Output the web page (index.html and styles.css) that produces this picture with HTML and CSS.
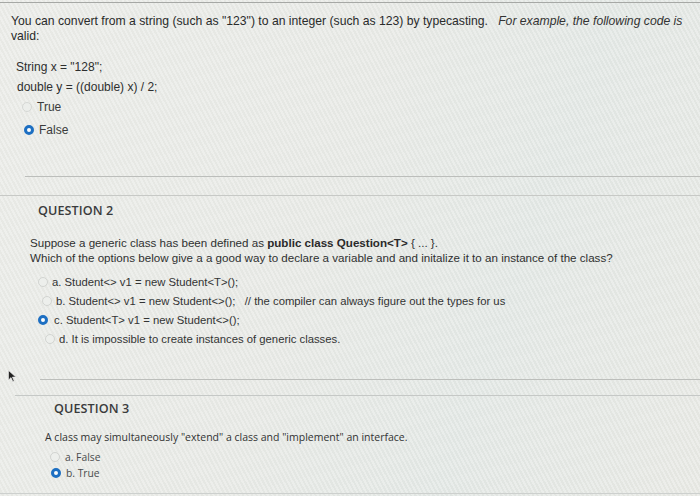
FILE: index.html
```html
<!DOCTYPE html>
<html>
<head>
<meta charset="utf-8">
<link rel="stylesheet" href="styles.css">
</head>
<body>
<div class="page">
  <div class="rule rule-top"></div>

  <section class="q1">
    <p class="intro">You can convert from a string (such as "123") to an integer (such as 123) by typecasting. &nbsp; <em>For example, the following code is</em><br>valid:</p>
    <div class="code">
      <div class="code-line">String x = "128";</div>
      <div class="code-line code-2">double y = ((double) x) / 2;</div>
    </div>
    <div class="opts q1-opts">
      <div class="opt opt-true"><span class="radio"></span><span>True</span></div>
      <div class="opt opt-false"><span class="radio on"></span><span>False</span></div>
    </div>
  </section>

  <div class="rule rule-a1"></div>
  <div class="rule rule-b1"></div>

  <section class="q2">
    <h2 class="qtitle">QUESTION 2</h2>
    <p class="qtext">Suppose a generic class has been defined as <b>public class Question&lt;T&gt;</b> { ... }.<br>Which of the options below give a a good way to declare a variable and and initalize it to an instance of the class?</p>
    <div class="opts q2-opts">
      <div class="opt o-a"><span class="radio"></span><span>a. Student&lt;&gt; v1 = new Student&lt;T&gt;();</span></div>
      <div class="opt o-b"><span class="radio"></span><span>b. Student&lt;&gt; v1 = new Student&lt;&gt;(); &nbsp; // the compiler can always figure out the types for us</span></div>
      <div class="opt o-c"><span class="radio on"></span><span>c. Student&lt;T&gt; v1 = new Student&lt;&gt;();</span></div>
      <div class="opt o-d"><span class="radio"></span><span>d. It is impossible to create instances of generic classes.</span></div>
    </div>
  </section>

  <div class="rule rule-a2"></div>
  <div class="rule rule-b2"></div>

  <section class="q3">
    <h2 class="qtitle">QUESTION 3</h2>
    <p class="qtext">A class may simultaneously "extend" a class and "implement" an interface.</p>
    <div class="opts q3-opts">
      <div class="opt o3-a"><span class="radio"></span><span>a. False</span></div>
      <div class="opt o3-b"><span class="radio on"></span><span>b. True</span></div>
    </div>
  </section>

  <div class="rule rule-bottom"></div>

  <svg class="cursor" width="9" height="12" viewBox="0 0 9 12"><path d="M0.5 0.5 L0.5 10 L3 7.6 L4.8 11.5 L6.2 10.9 L4.4 7.1 L7.8 7.1 Z" fill="#222" stroke="#eee" stroke-width="0.6"/></svg>
</div>
</body>
</html>
```

FILE: styles.css
```css
html, body {
  margin: 0;
  padding: 0;
}
body {
  width: 700px;
  height: 496px;
  overflow: hidden;
  background-color: #e5e7e3;
  background-image:
    repeating-linear-gradient(62deg, rgba(255,255,255,0.3) 0 2px, rgba(0,0,0,0) 2px 4px),
    linear-gradient(110deg, #e8e9e5 0%, #e5e7e3 45%, #e0e5e2 70%, #e5e6e1 100%);
  font-family: "Liberation Sans", Arial, sans-serif;
  color: #2f3030;
}
.page {
  position: relative;
  padding-top: 2px;
  height: 494px;
}
p { margin: 0; }
h2 { margin: 0; }

.rule {
  height: 0;
  border-top: 1px solid #bcbebb;
}
.rule-top { border-top-color: #a6a8a5; }

/* Question 1 */
.intro {
  margin-top: 11px;
  padding-left: 11px;
  font-size: 12.2px;
  line-height: 15px;
  color: #2a2b2b;
  white-space: nowrap;
}
.intro em { color: #333; }
.code {
  margin-top: 13px;
  padding-left: 16px;
  font-size: 12px;
  line-height: 20px;
  color: #2d2e2e;
}
.code-2 { padding-left: 1px; }

.opts { display: flex; flex-direction: column; }
.opt {
  display: flex;
  align-items: center;
  white-space: nowrap;
}
.radio {
  flex: none;
  width: 8px;
  height: 8px;
  border-radius: 50%;
  border: 1px solid #d2d4d1;
  background: #edefec;
  box-sizing: content-box;
}
.radio.on {
  width: 4px;
  height: 4px;
  border: 3px solid #1d6fc2;
  background: #fbfcfc;
}

.q1-opts { font-size: 12px; color: #3a3b3b; }
.opt-true { height: 20px; padding-left: 22px; gap: 5px; }
.opt-false { height: 20px; margin-top: 3px; padding-left: 24px; gap: 5px; }
.opt-true .radio { background: #eceeeb; border-color: #d6d8d5; }

.rule-a1 { margin-top: 36px; margin-left: 25px; }
.rule-b1 { margin-top: 18px; margin-left: 0; border-top-color: #c7c9c6; }

/* Question 2 */
.qtitle {
  font-family: "Open Sans", "Noto Sans", sans-serif;
  font-weight: 600;
  font-size: 12.6px;
  line-height: 16px;
  color: #3a3b3c;
  letter-spacing: 0.1px;
}
.q2 .qtitle { margin-top: 7px; padding-left: 38px; }
.q2 .qtext {
  margin-top: 16px;
  padding-left: 30px;
  font-size: 11.6px;
  line-height: 15px;
  color: #2f3030;
  white-space: nowrap;
}
.q2 .qtext b { color: #2a2a2a; }
.q2-opts {
  margin-top: 7px;
  font-size: 11.3px;
  color: #333434;
}
.q2-opts .opt { height: 19px; gap: 4px; }
.o-a { padding-left: 38px; }
.o-b { padding-left: 42px; }
.o-c { padding-left: 38px; gap: 6px !important; }
.o-d { padding-left: 45px; }

.rule-a2 { margin-top: 31px; margin-left: 40px; }
.rule-b2 { margin-top: 15px; margin-left: 15px; border-top-color: #c5c8c6; }

/* Question 3 */
.q3 .qtitle { margin-top: 5px; padding-left: 54px; }
.q3 .qtext {
  margin-top: 13px;
  padding-left: 45px;
  font-family: "Open Sans", "Noto Sans", sans-serif;
  font-size: 10.5px;
  line-height: 14px;
  color: #323333;
  white-space: nowrap;
}
.q3-opts {
  margin-top: 5px;
  font-family: "Open Sans", "Noto Sans", sans-serif;
  font-size: 10.3px;
  color: #4a4c4d;
}
.q3-opts .opt { height: 16px; gap: 5px; }
.o3-a { padding-left: 50px; }
.o3-b { padding-left: 51px; }

.rule-bottom { margin-top: 12px; border-top-color: #cdd0ce; }

.cursor {
  position: absolute;
  left: 8px;
  top: 370px;
}
```
